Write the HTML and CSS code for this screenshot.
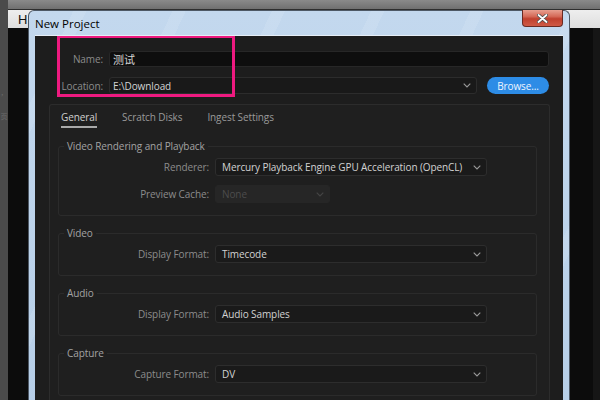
FILE: index.html
```html
<!DOCTYPE html>
<html>
<head>
<meta charset="utf-8">
<link rel="stylesheet" href="styles.css">
</head>
<body>
<div class="desktop">
  <div class="side">
    <span class="side-ch c1">，</span>
    <span class="side-ch c2">页</span>
  </div>
  <div class="back">
    <div class="back-top"></div>
    <div class="back-bar"><span class="back-title">H</span></div>
    <div class="back-body"><div class="back-edge"></div></div>
  </div>

  <div class="dialog">
    <div class="titlebar">
      <span class="title">New Project</span>
      <div class="close">
        <svg width="11" height="9" viewBox="0 0 11 9"><path d="M1.5 1 L9.5 8 M9.5 1 L1.5 8" stroke="#4a4a4a" stroke-width="3.4" stroke-linecap="round"/><path d="M1.5 1 L9.5 8 M9.5 1 L1.5 8" stroke="#ffffff" stroke-width="1.8" stroke-linecap="round"/></svg>
      </div>
    </div>
    <div class="content">
      <div class="head">
        <span class="label">Name:</span>
        <div class="field name-field">测试</div>
        <span class="label">Location:</span>
        <div class="loc">
          <div class="field loc-field"><span>E:\Download</span>
            <svg class="chev" width="8" height="5" viewBox="0 0 8 5"><polyline points="0.7,0.7 4,4 7.3,0.7" fill="none" stroke="#9a9a9a" stroke-width="1.1"/></svg>
          </div>
          <div class="browse">Browse...</div>
        </div>
        <div class="annot"></div>
      </div>

      <div class="panel">
        <div class="tabs">
          <span class="tab active">General</span>
          <span class="tab">Scratch Disks</span>
          <span class="tab">Ingest Settings</span>
        </div>
        <div class="groups">
          <fieldset class="group first">
            <legend>Video Rendering and Playback</legend>
            <div class="rows">
              <div class="row">
                <span class="glabel">Renderer:</span>
                <div class="dd"><span>Mercury Playback Engine GPU Acceleration (OpenCL)</span>
                  <svg class="chev" width="8" height="5" viewBox="0 0 8 5"><polyline points="0.7,0.7 4,4 7.3,0.7" fill="none" stroke="#9a9a9a" stroke-width="1.1"/></svg></div>
              </div>
              <div class="row">
                <span class="glabel">Preview Cache:</span>
                <div class="dd disabled"><span>None</span>
                  <svg class="chev" width="8" height="5" viewBox="0 0 8 5"><polyline points="0.7,0.7 4,4 7.3,0.7" fill="none" stroke="#454545" stroke-width="1.1"/></svg></div>
              </div>
            </div>
          </fieldset>
          <fieldset class="group">
            <legend>Video</legend>
            <div class="rows">
              <div class="row">
                <span class="glabel">Display Format:</span>
                <div class="dd"><span>Timecode</span>
                  <svg class="chev" width="8" height="5" viewBox="0 0 8 5"><polyline points="0.7,0.7 4,4 7.3,0.7" fill="none" stroke="#9a9a9a" stroke-width="1.1"/></svg></div>
              </div>
            </div>
          </fieldset>
          <fieldset class="group">
            <legend>Audio</legend>
            <div class="rows">
              <div class="row">
                <span class="glabel">Display Format:</span>
                <div class="dd"><span>Audio Samples</span>
                  <svg class="chev" width="8" height="5" viewBox="0 0 8 5"><polyline points="0.7,0.7 4,4 7.3,0.7" fill="none" stroke="#9a9a9a" stroke-width="1.1"/></svg></div>
              </div>
            </div>
          </fieldset>
          <fieldset class="group">
            <legend>Capture</legend>
            <div class="rows">
              <div class="row">
                <span class="glabel">Capture Format:</span>
                <div class="dd"><span>DV</span>
                  <svg class="chev" width="8" height="5" viewBox="0 0 8 5"><polyline points="0.7,0.7 4,4 7.3,0.7" fill="none" stroke="#9a9a9a" stroke-width="1.1"/></svg></div>
              </div>
            </div>
          </fieldset>
        </div>
      </div>
    </div>
  </div>
</div>
</body>
</html>
```
FILE: styles.css
```css
* { box-sizing: border-box; }

body {
  margin: 0;
  width: 600px;
  height: 400px;
  overflow: hidden;
  background: #0c0c0c;
  font-family: "Open Sans", "Noto Sans", sans-serif;
}

.desktop {
  position: relative;
  width: 600px;
  height: 400px;
  display: grid;
  grid-template-columns: 8px 1fr;
}

.side {
  background: #4b4b4b;
  overflow: hidden;
  color: #6c6c6c;
  font-family: "Noto Sans CJK SC", sans-serif;
  font-size: 7px;
  display: flex;
  flex-direction: column;
  align-items: center;
}
.side-ch { display: block; line-height: 8px; }
.side-ch.c1 { margin-top: 88px; }
.side-ch.c2 { margin-top: 16px; }

.back {
  display: flex;
  flex-direction: column;
}
.back-top {
  height: 10px;
  background: linear-gradient(#8a8a8a, #707070);
  border-bottom: 1px solid #2e2e2e;
}
.back-bar {
  height: 18px;
  background: linear-gradient(#eeeeee, #dedede);
  padding-left: 10px;
  display: flex;
  align-items: center;
}
.back-title {
  font-family: "Liberation Sans", sans-serif;
  font-size: 13px;
  color: #111;
}
.back-body {
  flex: 1;
  background: #0c0c0c;
  display: flex;
  justify-content: flex-end;
}
.back-edge {
  width: 7px;
  background: #161616;
}

/* dialog window */
.dialog {
  position: absolute;
  left: 28px;
  top: 10px;
  width: 542px;
  height: 400px;
  border: 1px solid #4e5966;
  border-bottom: none;
  border-radius: 6px 6px 0 0;
  padding: 0 6px;
  background:
    repeating-linear-gradient(115deg, rgba(255,255,255,0) 0 40px, rgba(255,255,255,0.10) 40px 52px, rgba(255,255,255,0) 52px 90px),
    linear-gradient(#c3d8ee, #b6cee7);
  display: flex;
  flex-direction: column;
}

.titlebar {
  position: relative;
  height: 24px;
  display: flex;
  align-items: center;
  flex-shrink: 0;
}
.title {
  font-family: "Open Sans", sans-serif;
  font-size: 11.5px;
  color: #000;
}
.close {
  position: absolute;
  left: 487px;
  top: -1px;
  width: 41px;
  height: 17px;
  border: 1px solid #6a2a22;
  border-top: none;
  border-radius: 0 0 4px 4px;
  background: linear-gradient(#e8a090 0%, #d56a58 40%, #c0402e 55%, #cf5a46 100%);
  display: flex;
  align-items: center;
  justify-content: center;
}

.content {
  flex: 1;
  background: #1d1d1d;
  overflow: hidden;
  border-top: 1px solid #e6eef7;
  letter-spacing: -0.1px;
}

/* header fields */
.head {
  position: relative;
  display: grid;
  grid-template-columns: 68px 1fr;
  column-gap: 6px;
  row-gap: 10px;
  padding: 15px 14px 0 0;
  align-items: center;
}
.label {
  text-align: right;
  font-size: 10px;
  color: #8c8c8c;
}
.field {
  border: 1px solid #272727;
  border-radius: 3px;
  padding-left: 3px;
  color: #d4d4d4;
  font-size: 10px;
  display: flex;
  align-items: center;
}
.name-field {
  height: 16px;
  background: #0e0e0e;
  font-family: "Noto Sans CJK SC", sans-serif;
  font-size: 11px;
}
.loc {
  display: flex;
  gap: 10px;
  align-items: center;
}
.loc-field {
  flex: 1;
  height: 17px;
  background: #191919;
  border-color: #2c2c2c;
  justify-content: space-between;
  padding-right: 5px;
}
.browse {
  width: 62px;
  height: 17px;
  border-radius: 9px;
  background: #2d8ce6;
  color: #eef5ff;
  font-size: 10px;
  display: flex;
  align-items: center;
  justify-content: center;
}
.annot {
  position: absolute;
  left: 22px;
  top: -1px;
  width: 178px;
  height: 62px;
  border: 3px solid #ee1a80;
  pointer-events: none;
}

/* tab panel */
.panel {
  margin: 10px 13px 0 14px;
  border: 1px solid #2c2c2c;
  border-bottom: none;
  border-radius: 3px 3px 0 0;
  background: #1f1f1f;
  height: 320px;
}
.tabs {
  display: flex;
  gap: 25px;
  padding: 5px 0 0 11px;
}
.tab {
  font-size: 10px;
  line-height: 14px;
  color: #9a9a9a;
  padding-bottom: 2px;
  border-bottom: 2px solid transparent;
}
.tab.active {
  color: #cfcfcf;
  border-bottom-color: #a9a9a9;
}

.groups {
  padding: 0 12px 0 8px;
}
.group {
  margin: 10px 0 0 0;
  border: 1px solid #2b2b2b;
  border-radius: 3px;
  padding: 5px 0 12px 0;
  min-width: 0;
}
.group.first {
  margin-top: 11px;
  padding-bottom: 12px;
}
.group legend {
  margin-left: 5px;
  padding: 0 3px;
  font-size: 10px;
  line-height: 14px;
  color: #a3a3a3;
}
.rows {
  display: flex;
  flex-direction: column;
  gap: 9px;
}
.row {
  display: grid;
  grid-template-columns: 150px 272px;
  column-gap: 6px;
  align-items: center;
}
.glabel {
  text-align: right;
  font-size: 10px;
  color: #8c8c8c;
}
.dd {
  height: 18px;
  background: #1a1a1a;
  border: 1px solid #2d2d2d;
  border-radius: 3px;
  padding: 0 5px 0 6px;
  display: flex;
  align-items: center;
  justify-content: space-between;
  font-size: 10px;
  color: #d2d2d2;
  white-space: nowrap;
}
.dd.disabled {
  width: 115px;
  background: #262626;
  border-color: #262626;
  color: #4c4c4c;
}
.chev { flex-shrink: 0; }
```
